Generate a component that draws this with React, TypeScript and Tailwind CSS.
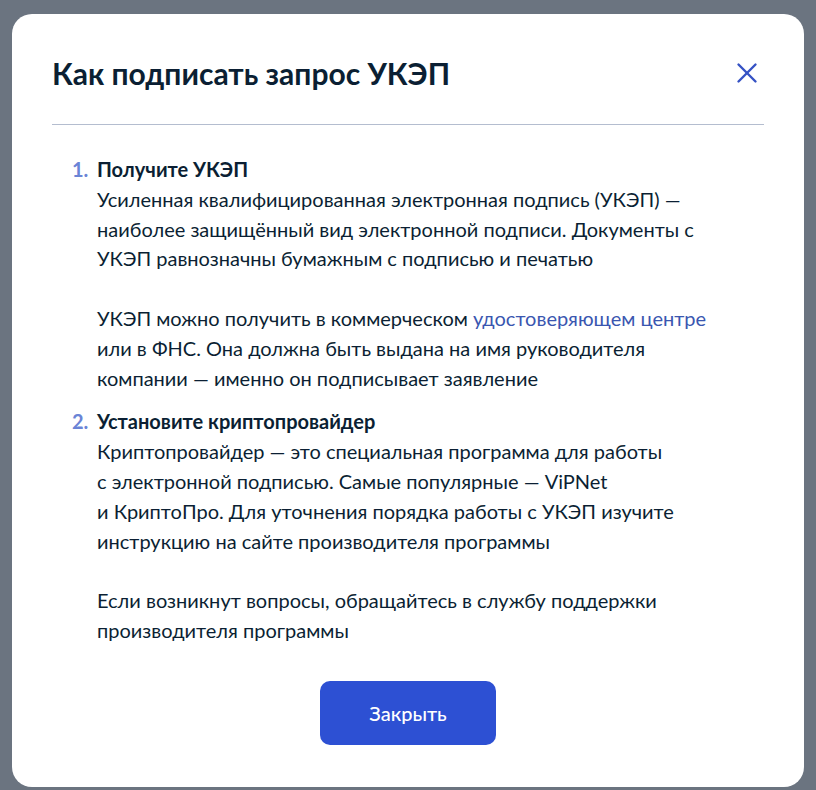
import { X } from 'lucide-react'

const font = { fontFamily: 'Lato, "Noto Sans", sans-serif' }

function Step({ n, title, children }: { n: number; title: string; children: React.ReactNode }) {
  return (
    <li className="flex">
      <span className="w-[25px] shrink-0 font-bold text-[#6a84d6]">{n}.</span>
      <div className="flex flex-col">
        <span className="font-bold text-[#0b1f33]">{title}</span>
        {children}
      </div>
    </li>
  )
}

export default function App() {
  return (
    <div className="min-h-[790px] w-full bg-[#6b7480] pl-3 pr-3 pt-[14px]" style={font}>
      <div className="flex h-[773px] w-[792px] flex-col rounded-[20px] bg-white px-10 pb-[42px] pt-10">
        <div className="flex h-[38px] items-center justify-between">
          <h1 className="text-[30px] font-bold leading-[38px] text-[#0b1f33]">Как подписать запрос УКЭП</h1>
          <button className="text-[#3552c4]">
            <X size={34} strokeWidth={1.7} />
          </button>
        </div>
        <div className="mt-8 h-px w-full bg-[#b4bdcf]" />
        <ol className="ml-5 mt-[30px] flex flex-col gap-[14px] whitespace-nowrap text-[20px] leading-[29.8px] text-[#0b1f33]">
          <Step n={1} title="Получите УКЭП">
            <p>
              Усиленная квалифицированная электронная подпись (УКЭП) —<br />
              наиболее защищённый вид электронной подписи. Документы с<br />
              УКЭП равнозначны бумажным с подписью и печатью
            </p>
            <p className="mt-[29.8px]">
              УКЭП можно получить в коммерческом{' '}
              <a className="text-[#3a56b0]">удостоверяющем центре</a>
              <br />
              или в ФНС. Она должна быть выдана на имя руководителя<br />
              компании — именно он подписывает заявление
            </p>
          </Step>
          <Step n={2} title="Установите криптопровайдер">
            <p>
              Криптопровайдер — это специальная программа для работы<br />
              с электронной подписью. Самые популярные — ViPNet<br />
              и КриптоПро. Для уточнения порядка работы с УКЭП изучите<br />
              инструкцию на сайте производителя программы
            </p>
            <p className="mt-[29.8px]">
              Если возникнут вопросы, обращайтесь в службу поддержки<br />
              производителя программы
            </p>
          </Step>
        </ol>
        <div className="mt-auto flex justify-center">
          <button className="h-16 w-[176px] rounded-[10px] bg-[#2d50d3] text-[20px] font-medium text-white">
            Закрыть
          </button>
        </div>
      </div>
    </div>
  )
}
